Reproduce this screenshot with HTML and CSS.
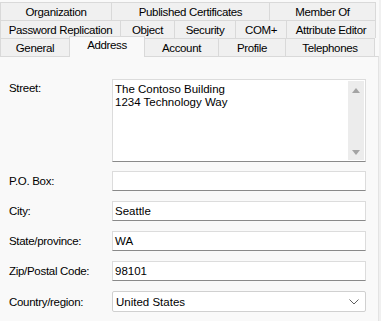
FILE: index.html
```html
<html><head>
<link rel="stylesheet" href="styles.css">
</head><body>
<div class="dialog">
  <div class="tabs">
    <div class="tab-row">
      <div class="tab w111">Organization</div>
      <div class="tab w158">Published Certificates</div>
      <div class="tab w107 last">Member Of</div>
    </div>
    <div class="tab-row">
      <div class="tab w120">Password Replication</div>
      <div class="tab w54">Object</div>
      <div class="tab w61">Security</div>
      <div class="tab w51">COM+</div>
      <div class="tab w90 last">Attribute Editor</div>
    </div>
    <div class="tab-row">
      <div class="tab w69">General</div>
      <div class="tab w76 selected">Address</div>
      <div class="tab w74">Account</div>
      <div class="tab w67">Profile</div>
      <div class="tab w90 last">Telephones</div>
    </div>
  </div>

  <div class="panel">
    <div class="field street">
      <div class="label">Street:</div>
      <div class="textarea">
        <div class="lines">The Contoso Building<br>1234 Technology Way</div>
        <div class="scrollbar">
          <span class="arrow up"></span>
          <span class="arrow down"></span>
        </div>
      </div>
    </div>
    <div class="field">
      <div class="label">P.O. Box:</div>
      <div class="input"></div>
    </div>
    <div class="field">
      <div class="label">City:</div>
      <div class="input">Seattle</div>
    </div>
    <div class="field">
      <div class="label">State/province:</div>
      <div class="input">WA</div>
    </div>
    <div class="field">
      <div class="label">Zip/Postal Code:</div>
      <div class="input">98101</div>
    </div>
    <div class="field">
      <div class="label">Country/region:</div>
      <div class="select">
        <span>United States</span>
        <svg width="10" height="6" viewBox="0 0 10 6"><path d="M0.5 0.5 L5 5 L9.5 0.5" fill="none" stroke="#606060" stroke-width="1"/></svg>
      </div>
    </div>
  </div>
</div>
</body></html>
```

FILE: styles.css
```css
body {
    margin: 0;
    background-color: #f0f0f0;
    font-family: "Liberation Sans", Arial, sans-serif;
    font-size: 11.5px;
    color: #000;
}
.dialog {
    width: 379px;
    height: 321px;
    display: flex;
    flex-direction: column;
    background-color: #f9f9f9;
}
.tabs {
    padding-top: 2px;
    background-color: #f9f9f9;
}
.tab-row {
    display: flex;
    height: 18px;
}
.tab {
    box-sizing: border-box;
    height: 18px;
    border-top: 1px solid #d9d9d9;
    border-left: 1px solid #d9d9d9;
    background-color: #f0f0f0;
    text-align: center;
    line-height: 18px;
    white-space: nowrap;
    letter-spacing: -0.35px;
}
.tab.last {
    border-right: 1px solid #d9d9d9;
}
.tab.selected {
    margin-top: -2px;
    height: 21px;
    line-height: 17px;
    background-color: #f9f9f9;
    border-right: 1px solid #d9d9d9;
    margin-right: -1px;
    z-index: 2;
}
.w111 { width: 111px; }
.w158 { width: 158px; }
.w107 { width: 107px; }
.w120 { width: 120px; }
.w54 { width: 54px; }
.w61 { width: 61px; }
.w51 { width: 51px; }
.w90 { width: 90px; }
.w69 { width: 69px; }
.w76 { width: 76px; }
.w74 { width: 74px; }
.w67 { width: 67px; }

.panel {
    flex: 1;
    border-top: 1px solid #d9d9d9;
    border-right: 1px solid #e3e3e3;
    padding: 22px 0 0 9px;
    display: flex;
    flex-direction: column;
    gap: 10px;
}
.field {
    display: flex;
    align-items: center;
}
.field.street {
    align-items: flex-start;
    margin-bottom: -1px;
}
.label {
    width: 103px;
    letter-spacing: -0.3px;
}
.street .label {
    padding-top: 3px;
}
.textarea {
    box-sizing: border-box;
    width: 254px;
    height: 83px;
    background-color: #fff;
    border: 1px solid #dcdcdc;
    border-bottom-color: #8a8a8a;
    display: flex;
    padding: 1px;
}
.lines {
    flex: 1;
    padding: 2px 0 0 1px;
    line-height: 13px;
}
.scrollbar {
    width: 16px;
    background-color: #ececec;
    display: flex;
    flex-direction: column;
    justify-content: space-between;
    align-items: center;
    padding: 7px 0 5px;
}
.arrow {
    width: 0;
    height: 0;
    border-left: 4px solid transparent;
    border-right: 4px solid transparent;
}
.arrow.up {
    border-bottom: 5px solid #a3a3a3;
}
.arrow.down {
    border-top: 5px solid #a3a3a3;
}
.input {
    box-sizing: border-box;
    width: 254px;
    height: 20px;
    background-color: #fff;
    border: 1px solid #dcdcdc;
    border-bottom-color: #8a8a8a;
    padding-left: 2px;
    line-height: 18px;
}
.select {
    box-sizing: border-box;
    width: 254px;
    height: 21px;
    background-color: #fff;
    border: 1px solid #d0d0d0;
    border-radius: 2px;
    display: flex;
    align-items: center;
    justify-content: space-between;
    padding: 0 6px 0 3px;
}
```
